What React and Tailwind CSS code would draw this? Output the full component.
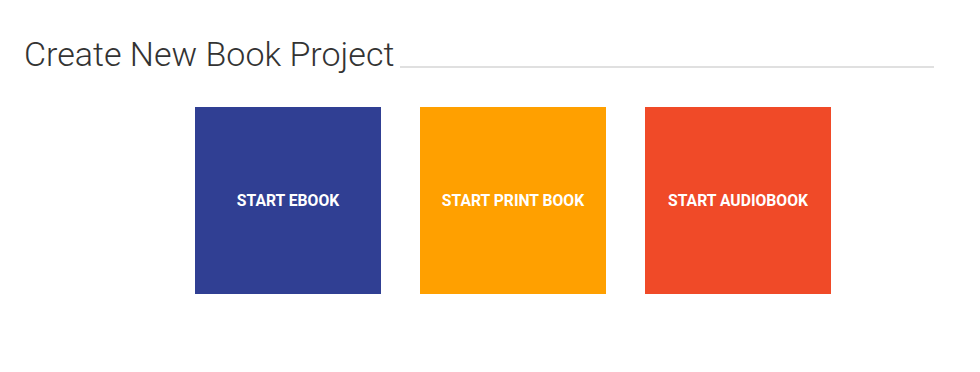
export default function App() {
  const boxes = [
    { label: "START EBOOK", cls: "bg-[#303f93]" },
    { label: "START PRINT BOOK", cls: "bg-[#ffa000]" },
    { label: "START AUDIOBOOK", cls: "bg-[#f04a28]" },
  ];
  return (
    <div className="w-[980px] h-[372px] bg-white" style={{ fontFamily: "Roboto, 'Noto Sans', sans-serif" }}>
      <div className="flex items-end pl-[24px] pr-[46px] pt-[34px]">
        <h1 className="text-[34px] font-light leading-[40px] text-[#333] whitespace-nowrap">Create New Book Project</h1>
        <div className="flex-1 ml-[6px] mb-[6px] h-[2px] bg-[#e0e0e0]" />
      </div>
      <div className="flex gap-[39px] pl-[195px] pt-[33px]">
        {boxes.map((b) => (
          <div key={b.label} className={`${b.cls} w-[186px] h-[187px] flex items-center justify-center`}>
            <span className="text-white font-bold text-[15.7px] uppercase">{b.label}</span>
          </div>
        ))}
      </div>
    </div>
  );
}
